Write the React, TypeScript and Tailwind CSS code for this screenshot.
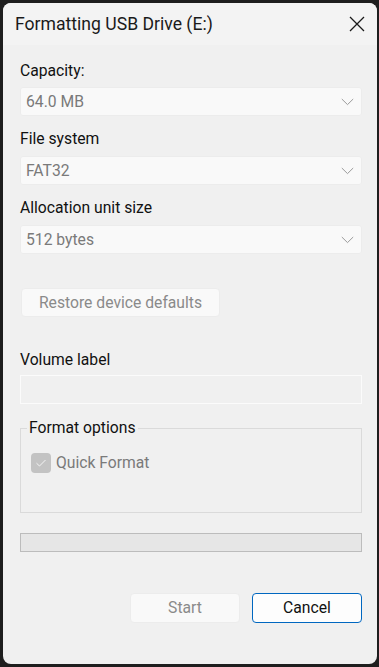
import React from 'react';

const font = { fontFamily: '"Segoe UI", Roboto, "Noto Sans", sans-serif' };

function Chevron() {
  return (
    <svg width="13" height="8" viewBox="0 0 13 8" fill="none" className="text-[#9a9a9a]">
      <path d="M0.8 1 L6.5 6.6 L12.2 1" stroke="currentColor" strokeWidth="1" />
    </svg>
  );
}

interface SelectBoxProps {
  value: string;
}

function SelectBox({ value }: SelectBoxProps) {
  return (
    <div className="flex h-[29px] items-center justify-between rounded-[3px] border border-[#ececec] bg-[#f9f9f9] pl-[5px] pr-[7px]">
      <span className="text-[15.7px] text-[#7a7a7a]">{value}</span>
      <Chevron />
    </div>
  );
}

function Label({ children }: { children: React.ReactNode }) {
  return <div className="h-5 text-[15.7px] leading-5 text-[#111]">{children}</div>;
}

export default function App() {
  return (
    <div className="min-h-[667px] w-[379px] bg-[#1e1e1e] p-[3px] pr-[2px]" style={font}>
      <div className="flex h-[661px] flex-col overflow-hidden rounded-[8px] bg-[#f0f0f0]">
        <div className="flex h-[42px] shrink-0 items-center justify-between bg-[#f3f3f3] pl-[12px] pr-[12px]">
          <span className="text-[17.6px] text-[#1a1a1a]">Formatting USB Drive (E:)</span>
          <svg width="16" height="16" viewBox="0 0 16 16" className="text-[#1a1a1a]">
            <path d="M1 1 L15 15 M15 1 L1 15" stroke="currentColor" strokeWidth="1.3" />
          </svg>
        </div>

        <div className="flex flex-col pl-[17px] pr-[15px]">
          <div className="mt-4">
            <Label>Capacity:</Label>
          </div>
          <div className="mt-[6px]">
            <SelectBox value="64.0 MB" />
          </div>

          <div className="mt-[13px]">
            <Label>File system</Label>
          </div>
          <div className="mt-[7px]">
            <SelectBox value="FAT32" />
          </div>

          <div className="mt-[13px]">
            <Label>Allocation unit size</Label>
          </div>
          <div className="mt-[7px]">
            <SelectBox value="512 bytes" />
          </div>

          <div className="mt-[34px] ml-px">
            <button
              type="button"
              className="flex h-[29px] w-[199px] items-center justify-center rounded-[4px] border border-[#ececec] bg-[#f9f9f9] text-[15.7px] text-[#8a8a8a]"
            >
              Restore device defaults
            </button>
          </div>

          <div className="mt-[33px]">
            <Label>Volume label</Label>
          </div>
          <div className="mt-[5px] h-[29px] border border-[#fbfbfb] bg-[#f0f0f0]" />

          <fieldset className="mt-[14px] h-[95px] border border-[#dadada]">
            <legend className="ml-[6px] px-[2px] text-[15.7px] leading-5 text-[#111]">Format options</legend>
            <div className="mt-[13px] flex items-center gap-[5px] pl-[10px]">
              <div className="flex h-[20px] w-[20px] items-center justify-center rounded-[4px] bg-[#c3c3c3]">
                <svg width="12" height="10" viewBox="0 0 12 10" fill="none">
                  <path d="M1.5 5.2 L4.5 8 L10.5 2" stroke="#f4f4f4" strokeWidth="1" />
                </svg>
              </div>
              <span className="text-[15.7px] text-[#7a7a7a]">Quick Format</span>
            </div>
          </fieldset>

          <div className="mt-[20px] h-[19px] border border-[#bcbcbc] bg-[#e6e6e6]" />

          <div className="mt-[41px] flex justify-end gap-[12px]">
            <button
              type="button"
              className="h-[30px] w-[110px] rounded-[4px] border border-[#ececec] bg-[#f9f9f9] text-[15.7px] text-[#8a8a8a]"
            >
              Start
            </button>
            <button
              type="button"
              className="h-[30px] w-[110px] rounded-[4px] border border-[#0067c0] bg-[#fdfdfd] text-[15.7px] text-[#111]"
            >
              Cancel
            </button>
          </div>
        </div>
      </div>
    </div>
  );
}
